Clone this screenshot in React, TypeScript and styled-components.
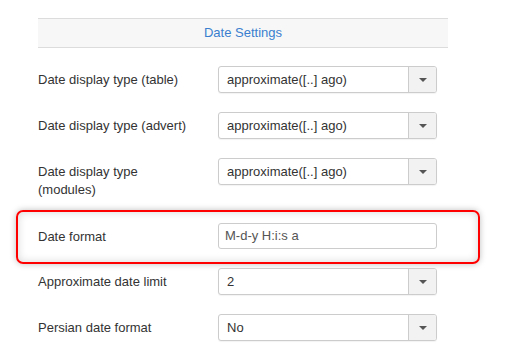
import styled, { createGlobalStyle } from 'styled-components'

const GlobalStyle = createGlobalStyle`
  html, body {
    margin: 0;
    padding: 0;
    background: #fff;
  }
  body {
    font-family: "Liberation Sans", Arial, sans-serif;
    font-size: 13px;
    color: #333;
  }
`

const Page = styled.div`
  width: 410px;
  padding: 18px 58px 0 38px;
`

const SectionHeader = styled.div`
  height: 28px;
  line-height: 28px;
  border-top: 1px solid #dcdcdc;
  border-bottom: 1px solid #dcdcdc;
  background: #f7f7f7;
  color: #3a7fcf;
  text-align: center;
  margin-bottom: 18px;
`

const Row = styled.div<{ $last?: boolean }>`
  display: flex;
  align-items: flex-start;
  margin-bottom: ${(p) => (p.$last ? '0' : '19px')};
`

const Label = styled.div`
  flex: 0 0 auto;
  width: 155px;
  padding: 5px 25px 0 0;
  line-height: 18px;
  color: #333;
`

const Highlight = styled.div`
  margin: -8px -32px 4px -22px;
  padding: 11px 30px 13px 20px;
  border: 2px solid #ff0000;
  border-radius: 7px;
  box-shadow: 0 0 6px rgba(0, 0, 0, 0.25), inset 0 0 9px rgba(0, 0, 0, 0.16);
`

const Select = styled.div`
  display: flex;
  width: 219px;
  height: 27px;
  box-sizing: border-box;
  border: 1px solid #ccc;
  border-radius: 3px;
  background: #fff;
  box-shadow: 0 1px 1px rgba(0, 0, 0, 0.05);
  overflow: hidden;
`

const SelectValue = styled.div`
  flex: 1 1 auto;
  padding-left: 8px;
  line-height: 25px;
  color: #333;
  white-space: nowrap;
`

const SelectArrow = styled.div`
  flex: 0 0 27px;
  display: flex;
  align-items: center;
  justify-content: center;
  border-left: 1px solid #ccc;
  background: #f2f2f2;
`

const Caret = styled.span`
  width: 0;
  height: 0;
  border-top: 4px solid #555;
  border-left: 4px solid transparent;
  border-right: 4px solid transparent;
`

const TextInput = styled.div`
  width: 219px;
  height: 26px;
  box-sizing: border-box;
  border: 1px solid #ccc;
  border-radius: 3px;
  padding-left: 6px;
  line-height: 24px;
  color: #555;
  background: #fff;
`

const SelectField = ({ value }: { value: string }) => (
  <Select>
    <SelectValue>{value}</SelectValue>
    <SelectArrow>
      <Caret />
    </SelectArrow>
  </Select>
)

export default function App() {
  return (
    <>
      <GlobalStyle />
      <Page>
        <SectionHeader>Date Settings</SectionHeader>
        <Row>
          <Label>Date display type (table)</Label>
          <SelectField value="approximate([..] ago)" />
        </Row>
        <Row>
          <Label>Date display type (advert)</Label>
          <SelectField value="approximate([..] ago)" />
        </Row>
        <Row>
          <Label>Date display type (modules)</Label>
          <SelectField value="approximate([..] ago)" />
        </Row>
        <Highlight>
          <Row $last>
            <Label>Date format</Label>
            <TextInput>M-d-y H:i:s a</TextInput>
          </Row>
        </Highlight>
        <Row>
          <Label>Approximate date limit</Label>
          <SelectField value="2" />
        </Row>
        <Row>
          <Label>Persian date format</Label>
          <SelectField value="No" />
        </Row>
      </Page>
    </>
  )
}
